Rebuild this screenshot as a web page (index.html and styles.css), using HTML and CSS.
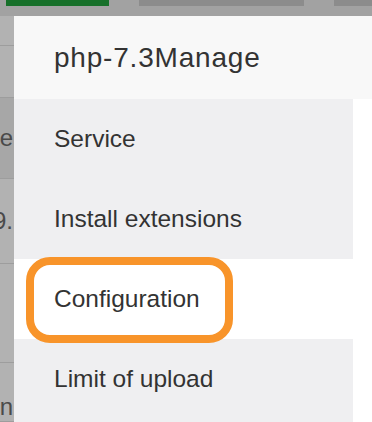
FILE: index.html
```html
<!DOCTYPE html>
<html lang="en">
<head>
  <meta charset="UTF-8">
  <title>php-7.3 Manage</title>
  <link rel="stylesheet" href="styles.css">
</head>
<body>
  <div class="backdrop">
    <div class="topbar">
      <span class="tab tab-green"></span>
      <span class="tab tab-gray"></span>
      <span class="tab tab-gray tab-last"></span>
    </div>
    <div class="side-rows">
      <div class="row r1"></div>
      <div class="row r2"></div>
      <div class="row r3 dark"><span>Service</span></div>
      <div class="row r4"><span>7.3.29.</span></div>
      <div class="row r5"></div>
      <div class="row r6"><span>Run</span></div>
    </div>
  </div>

  <div class="dialog">
    <div class="dialog-title">php-7.3Manage</div>
    <div class="dialog-body">
      <ul class="menu">
        <li class="menu-item">Service</li>
        <li class="menu-item">Install extensions</li>
        <li class="menu-item active">
          Configuration
          <span class="highlight"></span>
        </li>
        <li class="menu-item">Limit of upload</li>
      </ul>
      <div class="content"></div>
    </div>
  </div>
</body>
</html>
```

FILE: styles.css
```css
body {
  margin: 0;
  width: 372px;
  height: 422px;
  overflow: hidden;
  position: relative;
  background: #a9a9a9;
  font-family: "Liberation Sans", Arial, sans-serif;
}
.backdrop {
  display: flex;
  flex-direction: column;
  height: 100%;
}
.topbar {
  height: 16px;
  display: flex;
  align-items: flex-start;
  background: #a2a2a2;
}
.tab {
  display: block;
  height: 6px;
}
.tab-green {
  width: 107px;
  margin-left: 6px;
  background: #17702a;
}
.tab-gray {
  width: 172px;
  margin-left: 30px;
  background: #8c8c8c;
}
.tab-last {
  width: 40px;
}
.side-rows {
  width: 14px;
  overflow: hidden;
  display: flex;
  flex-direction: column;
}
.row {
  display: flex;
  justify-content: flex-end;
  align-items: center;
  white-space: nowrap;
  font-size: 24px;
  color: #4a4a4a;
  background: #b2b2b2;
  border-bottom: 1px solid #9d9d9d;
  padding-right: 1px;
}
.row.dark {
  background: #a7a7a7;
}
.r1 { height: 30px; }
.r2 { height: 53px; }
.r3 { height: 82px; }
.r4 { height: 86px; }
.r5 { height: 101px; }
.r6 { height: 60px; align-items: flex-end; }

.dialog {
  position: absolute;
  left: 14px;
  top: 16px;
  right: 0;
  bottom: 0;
  background: #fff;
  display: flex;
  flex-direction: column;
  color: #333;
}
.dialog-title {
  height: 83px;
  flex: none;
  box-sizing: border-box;
  padding-left: 40px;
  padding-top: 1px;
  display: flex;
  align-items: center;
  font-size: 28px;
  letter-spacing: 0.8px;
  background: #f8f8f8;
}
.dialog-body {
  flex: 1;
  display: flex;
}
.menu {
  list-style: none;
  margin: 0;
  padding: 0;
  width: 339px;
  background: #efeff1;
}
.menu-item {
  position: relative;
  height: 80px;
  box-sizing: border-box;
  padding-left: 40px;
  display: flex;
  align-items: center;
  font-size: 24.5px;
  white-space: nowrap;
}
.menu-item.active {
  background: #fff;
}
.highlight {
  position: absolute;
  left: 12px;
  top: -2px;
  width: 207px;
  height: 86px;
  box-sizing: border-box;
  border: 8px solid #f8942a;
  border-radius: 24px;
}
.content {
  flex: 1;
  background: #fff;
}
```
